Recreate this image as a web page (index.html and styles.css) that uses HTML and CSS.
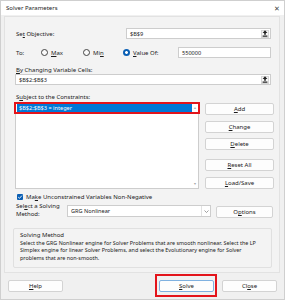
FILE: index.html
```html
<!DOCTYPE html>
<html lang="en">
<head>
  <meta charset="UTF-8" />
  <title>Solver Parameters</title>
  <link rel="stylesheet" href="styles.css">
</head>
<body>
  <div class="window">
    <div class="titlebar">
      <span>Solver Parameters</span>
      <span class="close">&#x2715;</span>
    </div>

    <div class="panel">
      <div class="row objective">
        <span class="label">Se<u>t</u> Objective:</span>
        <div class="field">
          <span>$B$9</span>
          <span class="refbtn">
            <svg width="6" height="7" viewBox="0 0 6 7"><path d="M3 0.3 L0.6 3 H2.2 V4.8 H3.8 V3 H5.4 Z M0.6 5.6 H5.4 V6.8 H0.6 Z" fill="#222"/></svg>
          </span>
        </div>
      </div>

      <div class="row to">
        <span class="to-label">To:</span>
        <span class="radio r-max"><span class="dot"></span><span><u>M</u>ax</span></span>
        <span class="radio r-min"><span class="dot"></span><span>Mi<u>n</u></span></span>
        <span class="radio r-val"><span class="dot on"></span><span><u>V</u>alue Of:</span></span>
        <div class="field">550000</div>
      </div>

      <div class="caption"><u>B</u>y Changing Variable Cells:</div>
      <div class="field">
        <span>$B$2:$B$3</span>
        <span class="refbtn">
          <svg width="6" height="7" viewBox="0 0 6 7"><path d="M3 0.3 L0.6 3 H2.2 V4.8 H3.8 V3 H5.4 Z M0.6 5.6 H5.4 V6.8 H0.6 Z" fill="#222"/></svg>
        </span>
      </div>

      <div class="caption">S<u>u</u>bject to the Constraints:</div>
      <div class="constraints">
        <div class="listbox">
          <div class="items">
            <div class="item selected">$B$2:$B$3 = integer</div>
          </div>
          <div class="scroll"><span>&#x25B2;</span><span>&#x25BC;</span></div>
          <div class="mark mark-row"></div>
        </div>
        <div class="side">
          <div class="btn b-add"><span><u>A</u>dd</span></div>
          <div class="btn b-change"><span><u>C</u>hange</span></div>
          <div class="btn b-delete"><span><u>D</u>elete</span></div>
          <div class="btn b-reset"><span><u>R</u>eset All</span></div>
          <div class="btn b-load"><span><u>L</u>oad/Save</span></div>
        </div>
      </div>

      <div class="check">
        <span class="box">
          <svg width="6" height="6" viewBox="0 0 6 6"><path d="M1.2 3.1 L2.5 4.3 L4.9 1.6" stroke="#fff" stroke-width="0.9" fill="none"/></svg>
        </span>
        <span>Ma<u>k</u>e Unconstrained Variables Non-Negative</span>
      </div>

      <div class="method">
        <span class="method-label">Sel<u>e</u>ct a Solving<br>Method:</span>
        <div class="select">
          <span>GRG Nonlinear</span>
          <span class="arrow">
            <svg width="5" height="3" viewBox="0 0 5 3"><path d="M0.5 0.5 L2.5 2.5 L4.5 0.5" stroke="#777" stroke-width="0.7" fill="none"/></svg>
          </span>
        </div>
        <div class="btn b-options"><span>O<u>p</u>tions</span></div>
      </div>

      <div class="group">
        <div class="group-title">Solving Method</div>
        <div class="desc">
          Select the GRG Nonlinear engine for Solver Problems that are smooth nonlinear. Select the LP<br>
          Simplex engine for linear Solver Problems, and select the Evolutionary engine for Solver<br>
          problems that are non-smooth.
        </div>
      </div>
    </div>

    <div class="footer">
      <div class="btn b-help"><span><u>H</u>elp</span></div>
      <div class="btn b-solve"><span><u>S</u>olve</span><span class="mark mark-solve"></span></div>
      <div class="btn b-close"><span>Cl<u>o</u>se</span></div>
    </div>
  </div>
</body>
</html>
```

FILE: styles.css
```css
* {
  box-sizing: border-box;
}
body {
  margin: 0;
  font-family: "Noto Sans", "Open Sans", sans-serif;
  font-size: 6px;
  color: #1b1b1b;
  background: #f0f0f0;
}
u {
  text-underline-offset: 1px;
  text-decoration-thickness: 0.5px;
}
.window {
  width: 285px;
  height: 300px;
  background: #f0f0f0;
  box-shadow: inset 0 0 0 1px #cfcfcf;
  overflow: hidden;
}
.titlebar {
  height: 15px;
  background: #ffffff;
  display: flex;
  align-items: center;
  justify-content: space-between;
  padding: 0 4px 0 5px;
  border: 1px solid #cfcfcf;
  border-bottom: none;
}
.close {
  font-size: 7px;
  color: #444;
}
.panel {
  margin: 1px 5px 0 4px;
  border: 1px solid #e2e2e2;
  background: #f3f3f3;
  padding: 11px 5px 4px 10px;
}
.row {
  display: flex;
  align-items: center;
  height: 11px;
}
.label {
  width: 111px;
  padding-left: 1px;
}
.field {
  height: 11px;
  flex: 1;
  margin-right: 3px;
  background: #ffffff;
  border: 1px solid #cdcdcd;
  display: flex;
  align-items: center;
  padding-left: 3px;
  font-size: 5.6px;
}
.refbtn {
  margin-left: auto;
  margin-right: 1px;
  width: 8px;
  height: 8px;
  border: 1px solid #d6d6d6;
  background: #f6f6f6;
  display: flex;
  align-items: center;
  justify-content: center;
}
.to {
  margin-top: 8px;
}
.to-label {
  width: 26px;
  padding-left: 1px;
}
.radio {
  display: flex;
  align-items: center;
  gap: 3px;
}
.r-max { width: 42px; }
.r-min { width: 40px; }
.r-val { width: 55px; }
.dot {
  width: 7px;
  height: 7px;
  border-radius: 50%;
  border: 0.8px solid #444;
  background: #fafafa;
}
.dot.on {
  border: none;
  background: radial-gradient(circle, #ffffff 0 1.2px, #0a5fb4 1.6px);
}
.caption {
  margin-top: 8px;
  height: 8px;
  line-height: 8px;
  padding-left: 1px;
}
.constraints {
  display: flex;
  gap: 6px;
  margin-top: 1px;
}
.listbox {
  position: relative;
  width: 184px;
  height: 87px;
  background: #ffffff;
  border: 1px solid #cdcdcd;
  display: flex;
}
.items {
  flex: 1;
  padding: 1px 0 0 1px;
}
.item {
  height: 8px;
  line-height: 8px;
  padding-left: 2px;
  font-size: 5.6px;
}
.item.selected {
  background: #0078d7;
  color: #ffffff;
}
.scroll {
  width: 6px;
  display: flex;
  flex-direction: column;
  justify-content: space-between;
  align-items: center;
  font-size: 3.5px;
  color: #a8a8a8;
  padding: 2px 0;
}
.mark {
  position: absolute;
  border: 2px solid #e3141b;
}
.mark-row {
  top: -1px;
  left: -2px;
  right: -2px;
  height: 12px;
}
.side {
  width: 69px;
  display: flex;
  flex-direction: column;
}
.btn {
  height: 12px;
  background: #fdfdfd;
  border: 1px solid #d3d3d3;
  border-radius: 2px;
  display: flex;
  align-items: center;
  justify-content: center;
}
.b-add { margin-top: 1px; }
.b-change { margin-top: 6px; }
.b-delete { margin-top: 5px; }
.b-reset { margin-top: 9px; }
.b-load { margin-top: 6px; }
.check {
  margin-top: 4px;
  height: 7px;
  display: flex;
  align-items: center;
  padding-left: 2px;
}
.box {
  width: 6px;
  height: 6px;
  border-radius: 1px;
  background: #0a5fb4;
  margin-right: 3px;
  display: flex;
}
.method {
  margin-top: 2px;
  display: flex;
  align-items: flex-start;
}
.method-label {
  width: 52px;
  line-height: 8px;
  padding-left: 1px;
}
.select {
  width: 144px;
  height: 12px;
  margin-top: 3px;
  background: #ffffff;
  border: 1px solid #cdcdcd;
  display: flex;
  align-items: center;
  padding-left: 3px;
  font-size: 5.6px;
}
.arrow {
  margin-left: auto;
  width: 9px;
  height: 10px;
  border-left: 1px solid #e2e2e2;
  display: flex;
  align-items: center;
  justify-content: center;
}
.b-options {
  width: 57px;
  margin-top: 4px;
  margin-left: 5px;
}
.group {
  margin: 10px 2px 0 -2px;
  height: 40px;
  border: 1px solid #e0e0e0;
  border-radius: 2px;
  padding: 2px 6px 0 6px;
}
.group-title {
  line-height: 8px;
}
.desc {
  margin-top: 1px;
  font-size: 5.4px;
  line-height: 7.3px;
  white-space: nowrap;
}
.footer {
  margin-top: 7px;
  display: flex;
  padding-left: 8px;
}
.footer .btn {
  width: 55px;
}
.b-solve {
  position: relative;
  margin-left: 96px;
  border-color: #7fb1e0;
}
.mark-solve {
  top: -7px;
  left: -5px;
  right: -4px;
  bottom: -6px;
}
.b-close {
  margin-left: 8px;
}
```
